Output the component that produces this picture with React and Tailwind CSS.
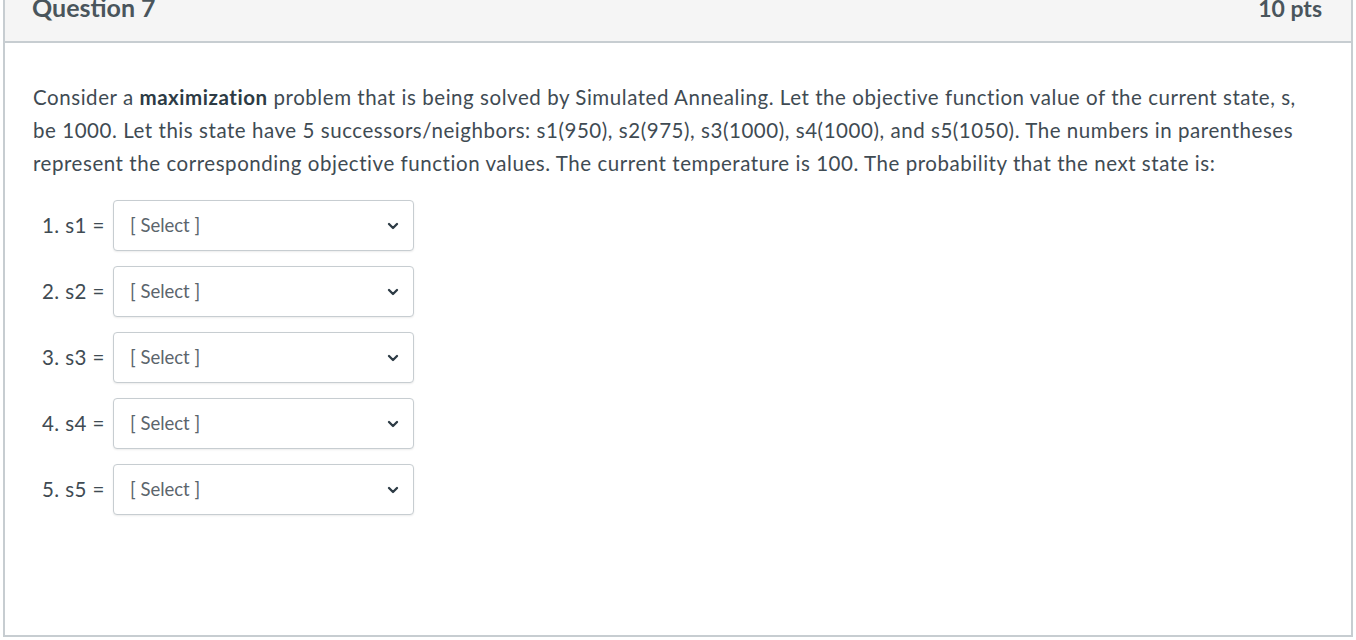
import { ChevronDown } from "lucide-react";

const rows = ["s1", "s2", "s3", "s4", "s5"];

function SelectBox() {
  return (
    <div className="flex items-center justify-between w-[301px] h-[51px] border border-[#c7cdd1] rounded-[4px] bg-white pl-[16px] pr-[12px] shadow-[0_1px_2px_rgba(0,0,0,0.08)]">
      <span className="text-[18.5px] text-[#5b656c]">[ Select ]</span>
      <ChevronDown className="w-[16px] h-[16px] text-[#2d3b45]" strokeWidth={3.5} />
    </div>
  );
}

export default function App() {
  return (
    <div
      className="w-[1356px] h-[640px] overflow-hidden bg-white text-[#2d3b45]"
      style={{ fontFamily: "Lato, 'Open Sans', sans-serif" }}
    >
      <div className="ml-[3px] mr-[3px] mt-[-22px] h-[659px] border-2 border-[#c7cdd1] flex flex-col">
        <div className="flex items-center justify-between h-[63px] bg-[#f5f5f5] border-b-2 border-[#c7cdd1] pl-[27px] pr-[29px] pb-[5px]">
          <span className="text-[25px] font-bold text-[#4a555c]">Question 7</span>
          <span className="text-[23px] font-bold text-[#4a555c]">10 pts</span>
        </div>
        <div className="pl-[28px] pr-[30px] pt-[38px]">
          <p className="text-[20.5px] leading-[33px] tracking-[0.55px] text-[#3f4b53]">
            Consider a <b className="text-[#2d3b45]">maximization</b> problem that is being solved by Simulated Annealing. Let the objective function value of the current state, s, be 1000. Let this state have 5 successors/neighbors: s1(950), s2(975), s3(1000), s4(1000), and s5(1050). The numbers in parentheses represent the corresponding objective function values. The current temperature is 100. The probability that the next state is:
          </p>
          <div className="flex flex-col gap-[15px] mt-[20px]">
            {rows.map((s, i) => (
              <div key={s} className="flex items-center">
                <span className="w-[80px] pl-[9px] text-[20.5px] tracking-[0.4px] text-[#3f4b53] whitespace-nowrap">
                  {i + 1}. {s} =
                </span>
                <SelectBox />
              </div>
            ))}
          </div>
        </div>
      </div>
    </div>
  );
}
